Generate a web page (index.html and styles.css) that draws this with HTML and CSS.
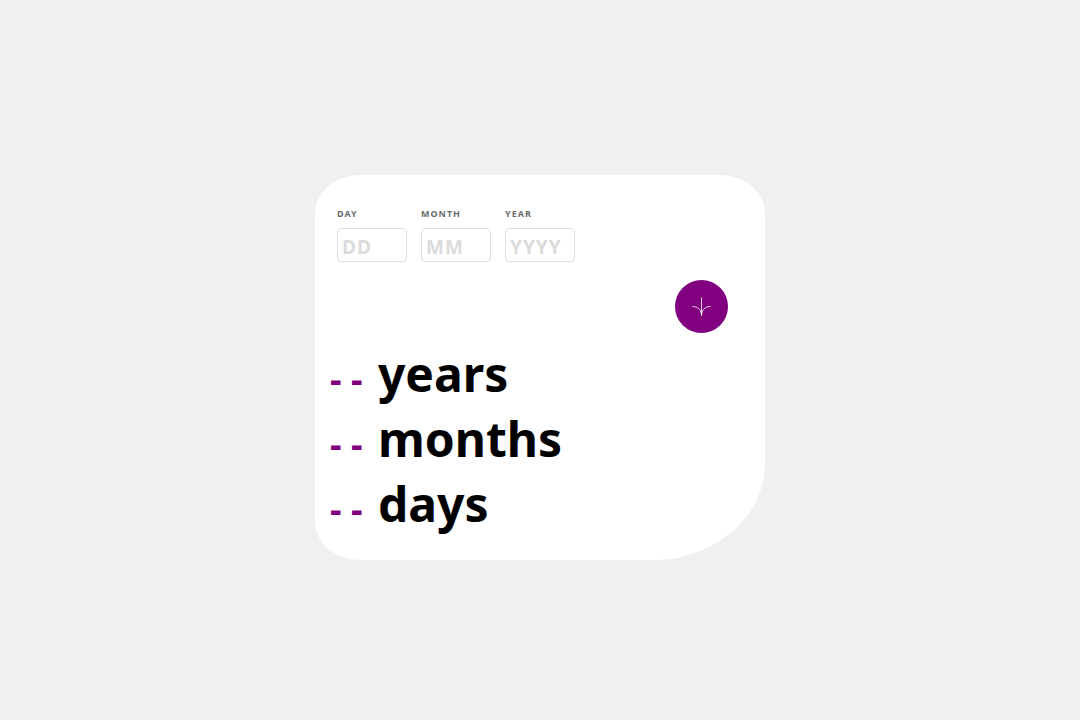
FILE: index.html
```html
<!DOCTYPE html>
<html lang="en">
  <head>
    <meta charset="UTF-8" />
    <meta name="viewport" content="width=device-width, initial-scale=1.0" />
    <title>Age calculator</title>
    <link rel="stylesheet" href="styles.css">
  </head>
  <body>
    <main class="card">
      <form class="age-form">
        <div class="fields">
          <div class="field">
            <label for="day">DAY</label>
            <input type="text" id="day" placeholder="DD" />
          </div>
          <div class="field">
            <label for="month">MONTH</label>
            <input type="text" id="month" placeholder="MM" />
          </div>
          <div class="field">
            <label for="year">YEAR</label>
            <input type="text" id="year" placeholder="YYYY" />
          </div>
        </div>
        <button type="button" class="submit-btn" aria-label="Calculate age">
          <svg width="19" height="19" viewBox="0 0 46 44">
            <path fill="none" stroke="#fff" stroke-width="2" d="M1 22.019C8.333 21.686 23 25.616 23 44M23 44V0M45 22.019C37.667 21.686 23 25.616 23 44" />
          </svg>
        </button>
      </form>

      <section class="result">
        <p><span class="value">- -</span> years</p>
        <p><span class="value">- -</span> months</p>
        <p><span class="value">- -</span> days</p>
      </section>
    </main>
  </body>
</html>
```
FILE: styles.css
```css
* {
  margin: 0;
  padding: 0;
  box-sizing: border-box;
}

body {
  min-height: 100vh;
  background-color: #f0f0f0;
  font-family: "Noto Sans", sans-serif;
  display: flex;
  justify-content: center;
  align-items: center;
}

.card {
  width: 90%;
  max-width: 450px;
  margin-top: 15px;
  padding: 32px 15px 24px;
  background-color: white;
  border-radius: 10% 10% 25% 10%;
}

.age-form {
  display: flex;
  flex-direction: column;
  padding: 0 22px 0 7px;
}

.fields {
  display: flex;
  gap: 14px;
}

.field {
  display: flex;
  flex-direction: column;
  gap: 7px;
  width: 70px;
}

.field label {
  font-size: 9px;
  line-height: 14px;
  font-weight: bold;
  letter-spacing: 1px;
  color: #6a6a6a;
}

.field input {
  width: 100%;
  height: 34px;
  padding: 4px 4px 0;
  border: 1px solid #dfdfdf;
  border-radius: 4px;
  font-family: inherit;
  font-size: 19px;
  font-weight: bold;
  letter-spacing: 1px;
}

.field input::placeholder {
  color: #dbdbdb;
}

.submit-btn {
  display: flex;
  justify-content: center;
  align-items: center;
  align-self: flex-end;
  width: 53px;
  height: 53px;
  margin-top: 18px;
  border: none;
  border-radius: 50%;
  background-color: purple;
  cursor: pointer;
}

.result {
  margin-top: 8px;
  font-size: 48px;
  line-height: 65px;
  font-weight: bold;
}

.value {
  margin-right: 3px;
  font-size: 36px;
  line-height: 1;
  color: purple;
}
```
